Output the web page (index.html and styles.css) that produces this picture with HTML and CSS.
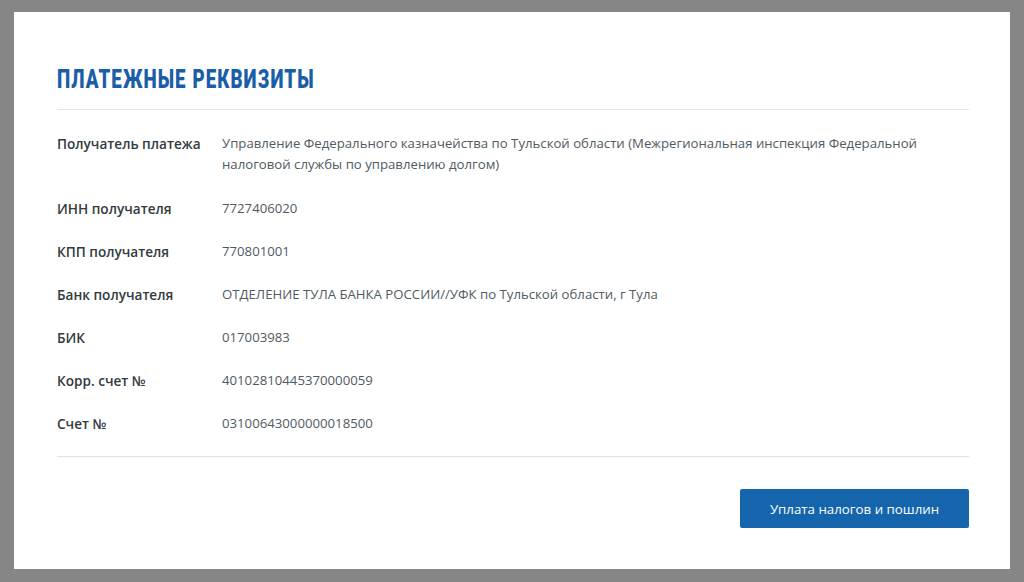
FILE: index.html
```html
<!DOCTYPE html>
<html lang="ru">
<head>
<meta charset="utf-8">
<title>Платежные реквизиты</title>
<link rel="stylesheet" href="styles.css">
</head>
<body>
<div class="card">
  <h1 class="title"><span class="title-text">ПЛАТЕЖНЫЕ РЕКВИЗИТЫ</span></h1>
  <div class="details">
    <div class="row row-first">
      <div class="label">Получатель платежа</div>
      <div class="value">Управление Федерального казначейства по Тульской области (Межрегиональная инспекция Федеральной налоговой службы по управлению долгом)</div>
    </div>
    <div class="row">
      <div class="label">ИНН получателя</div>
      <div class="value">7727406020</div>
    </div>
    <div class="row">
      <div class="label">КПП получателя</div>
      <div class="value">770801001</div>
    </div>
    <div class="row">
      <div class="label">Банк получателя</div>
      <div class="value">ОТДЕЛЕНИЕ ТУЛА БАНКА РОССИИ//УФК по Тульской области, г Тула</div>
    </div>
    <div class="row">
      <div class="label">БИК</div>
      <div class="value">017003983</div>
    </div>
    <div class="row">
      <div class="label">Корр. счет №</div>
      <div class="value">40102810445370000059</div>
    </div>
    <div class="row">
      <div class="label">Счет №</div>
      <div class="value">03100643000000018500</div>
    </div>
  </div>
  <div class="actions">
    <button class="btn" type="button">Уплата налогов и пошлин</button>
  </div>
</div>
</body>
</html>
```
FILE: styles.css
```css
html, body {
  margin: 0;
  padding: 0;
}
body {
  background: #868686;
  width: 1024px;
  height: 582px;
  overflow: hidden;
  font-family: "Open Sans", "Liberation Sans", sans-serif;
}
.card {
  margin: 12px 0 0 14px;
  width: 996px;
  height: 557px;
  box-sizing: border-box;
  background: #fff;
  padding: 52px 41px 0 43px;
}
.title {
  margin: 0;
  font-family: "Roboto", "Liberation Sans", sans-serif;
  font-weight: 900;
  font-size: 26px;
  line-height: 30px;
  letter-spacing: 1.5px;
  color: #1a5ea8;
  padding-bottom: 15px;
  border-bottom: 1px solid #e3e3e3;
  white-space: nowrap;
}
.title-text {
  display: inline-block;
  transform: scaleX(0.72);
  transform-origin: left center;
}
.details {
  padding: 23px 0 22px;
  border-bottom: 1px solid #e3e3e3;
  display: flex;
  flex-direction: column;
  gap: 22px;
}
.row {
  display: flex;
  font-size: 13.2px;
  line-height: 21px;
}
.row-first {
  margin-bottom: 1px;
}
.label {
  width: 165px;
  flex: none;
  font-weight: 600;
  font-size: 13.6px;
  color: #333a40;
}
.value {
  flex: 1;
  color: #4f5a63;
}
.actions {
  display: flex;
  justify-content: flex-end;
  padding-top: 32px;
}
.btn {
  width: 229px;
  height: 39px;
  border: none;
  border-radius: 2px;
  background: #1565ad;
  color: #fff;
  font-family: "Open Sans", "Liberation Sans", sans-serif;
  font-size: 13.3px;
  padding: 0;
}
```
